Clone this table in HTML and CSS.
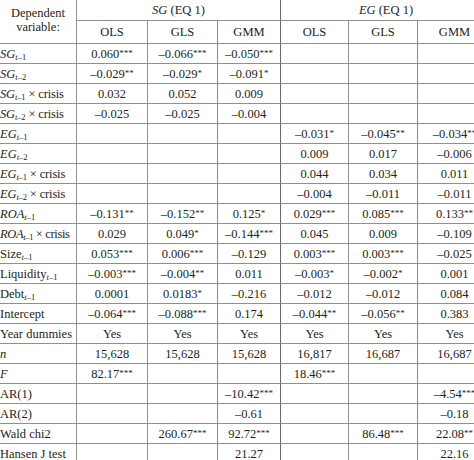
FILE: index.html
```html
<!DOCTYPE html>
<html>
<head>
<meta charset="utf-8">
<link rel="stylesheet" href="styles.css">
</head>
<body>
<div class="frame">
<div class="head">
  <div class="hc dep">Dependent<br>variable:</div>
  <div class="hc grp sg"><i>SG</i>&nbsp;(EQ 1)</div>
  <div class="hc grp eg"><i>EG</i>&nbsp;(EQ 1)</div>
  <div class="hc">OLS</div>
  <div class="hc">GLS</div>
  <div class="hc split">GMM</div>
  <div class="hc">OLS</div>
  <div class="hc">GLS</div>
  <div class="hc">GMM</div>
</div>
<div class="body">
  <div class="lab"><i>SG</i><sub><i>t</i>–1</sub></div><div>0.060<s>***</s></div><div>–0.066<s>***</s></div><div>–0.050<s>***</s></div><div></div><div></div><div></div>
  <div class="lab"><i>SG</i><sub><i>t</i>–2</sub></div><div>–0.029<s>**</s></div><div>–0.029<s>*</s></div><div>–0.091<s>*</s></div><div></div><div></div><div></div>
  <div class="lab tight"><i>SG</i><sub><i>t</i>–1</sub>&nbsp;× crisis</div><div>0.032</div><div>0.052</div><div>0.009</div><div></div><div></div><div></div>
  <div class="lab tight"><i>SG</i><sub><i>t</i>–2</sub>&nbsp;× crisis</div><div>–0.025</div><div>–0.025</div><div>–0.004</div><div></div><div></div><div></div>
  <div class="lab"><i>EG</i><sub><i>t</i>–1</sub></div><div></div><div></div><div></div><div>–0.031<s>*</s></div><div>–0.045<s>**</s></div><div>–0.034<s>**</s></div>
  <div class="lab"><i>EG</i><sub><i>t</i>–2</sub></div><div></div><div></div><div></div><div>0.009</div><div>0.017</div><div>–0.006</div>
  <div class="lab tight"><i>EG</i><sub><i>t</i>–1</sub>&nbsp;× crisis</div><div></div><div></div><div></div><div>0.044</div><div>0.034</div><div>0.011</div>
  <div class="lab tight"><i>EG</i><sub><i>t</i>–2</sub>&nbsp;× crisis</div><div></div><div></div><div></div><div>–0.004</div><div>–0.011</div><div>–0.011</div>
  <div class="lab"><i>ROA</i><sub><i>t</i>–1</sub></div><div>–0.131<s>**</s></div><div>–0.152<s>**</s></div><div>0.125<s>*</s></div><div>0.029<s>***</s></div><div>0.085<s>***</s></div><div>0.133<s>**</s></div>
  <div class="lab tighter"><i>ROA</i><sub><i>t</i>–1</sub>&nbsp;× crisis</div><div>0.029</div><div>0.049<s>*</s></div><div>–0.144<s>***</s></div><div>0.045</div><div>0.009</div><div>–0.109</div>
  <div class="lab">Size<sub><i>t</i>–1</sub></div><div>0.053<s>***</s></div><div>0.006<s>***</s></div><div>–0.129</div><div>0.003<s>***</s></div><div>0.003<s>***</s></div><div>–0.025</div>
  <div class="lab">Liquidity<sub><i>t</i>–1</sub></div><div>–0.003<s>***</s></div><div>–0.004<s>**</s></div><div>0.011</div><div>–0.003<s>*</s></div><div>–0.002<s>*</s></div><div>0.001</div>
  <div class="lab">Debt<sub><i>t</i>–1</sub></div><div>0.0001</div><div>0.0183<s>*</s></div><div>–0.216</div><div>–0.012</div><div>–0.012</div><div>0.084</div>
  <div class="lab">Intercept</div><div>–0.064<s>***</s></div><div>–0.088<s>***</s></div><div>0.174</div><div>–0.044<s>**</s></div><div>–0.056<s>**</s></div><div>0.383</div>
  <div class="lab">Year dummies</div><div>Yes</div><div>Yes</div><div>Yes</div><div>Yes</div><div>Yes</div><div>Yes</div>
  <div class="lab"><i>n</i></div><div>15,628</div><div>15,628</div><div>15,628</div><div>16,817</div><div>16,687</div><div>16,687</div>
  <div class="lab"><i>F</i></div><div>82.17<s>***</s></div><div></div><div></div><div>18.46<s>***</s></div><div></div><div></div>
  <div class="lab">AR(1)</div><div></div><div></div><div>–10.42<s>***</s></div><div></div><div></div><div>–4.54<s>***</s></div>
  <div class="lab">AR(2)</div><div></div><div></div><div>–0.61</div><div></div><div></div><div>–0.18</div>
  <div class="lab">Wald chi2</div><div></div><div>260.67<s>***</s></div><div>92.72<s>***</s></div><div></div><div>86.48<s>***</s></div><div>22.08<s>**</s></div>
  <div class="lab">Hansen J test</div><div></div><div></div><div>21.27</div><div></div><div></div><div>22.16</div>
</div>
</div>
</body>
</html>
```

FILE: styles.css
```css
html, body {
  margin: 0;
  padding: 0;
  background: #ffffff;
}
.frame {
  width: 474px;
  height: 460px;
  overflow: hidden;
  font-family: "Liberation Serif", "Times New Roman", serif;
  font-size: 12.5px;
  color: #231f20;
}
.head, .body {
  display: grid;
  grid-template-columns: 77px 71px 70px 63px 68px 69px 74px;
  width: 492px;
}
.head {
  grid-template-rows: 21px 23px;
}
.body {
  grid-auto-rows: 20px;
}
.head > div, .body > div {
  box-sizing: border-box;
  border-right: 1px solid #8f8f8f;
  border-bottom: 1px solid #8f8f8f;
  display: flex;
  align-items: center;
  justify-content: center;
  white-space: nowrap;
  line-height: 14px;
  overflow: hidden;
}
.head .dep {
  grid-row: 1 / 3;
  grid-column: 1;
  line-height: 13.5px;
  text-align: center;
  padding: 0 0 2px 0;
}
.head .sg {
  grid-column: 2 / 5;
  border-right-color: #6a6a6a;
}
.head .eg {
  grid-column: 5 / 8;
}
.head .split,
.body > div:nth-child(7n+4) {
  border-right-color: #6a6a6a;
}
.head .grp { padding-bottom: 1px; }
.body > div.lab {
  justify-content: flex-start;
  padding-left: 0;
}
.body > div.tight { letter-spacing: -0.15px; }
.body > div.tighter { letter-spacing: -0.35px; }
.body sub {
  font-size: 8.5px;
  line-height: 0;
  vertical-align: baseline;
  position: relative;
  top: 3px;
}
.body s {
  text-decoration: none;
  font-size: 9px;
  line-height: 0;
  vertical-align: baseline;
  position: relative;
  top: -1px;
}
```
